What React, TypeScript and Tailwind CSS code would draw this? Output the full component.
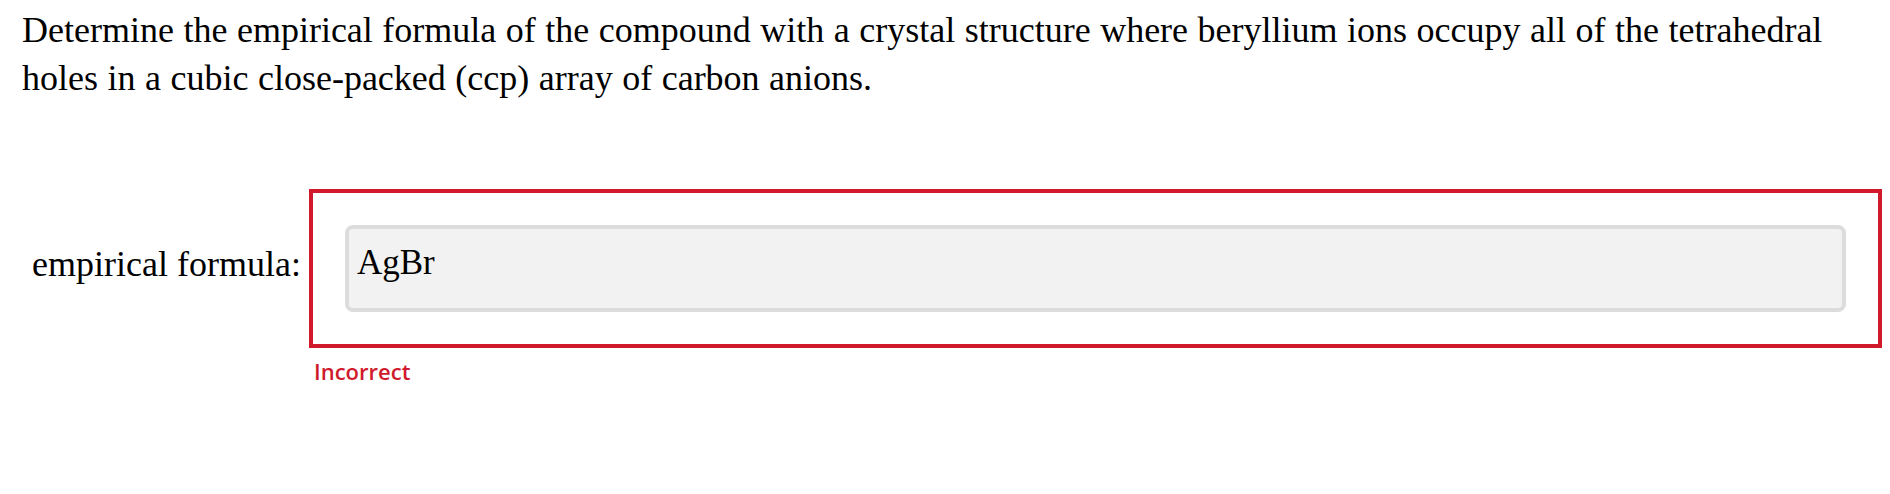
export default function App() {
  return (
    <main className="min-h-screen w-full bg-white pl-[22px] pr-2 pt-[6px] text-black font-['Liberation_Serif','Times_New_Roman',serif]">
      {/* Question */}
      <p className="text-[36px] leading-[48px] [word-spacing:0.5px]">
        Determine the empirical formula of the compound with a crystal structure where beryllium ions occupy all of the tetrahedral holes in a cubic close-packed (ccp) array of carbon anions.
      </p>

      {/* Answer row */}
      <div className="mt-[87px] flex items-center">
        <label className="mb-[10px] w-[287px] shrink-0 pl-[10px] text-[36px] leading-[40px]">empirical formula:</label>
        <div className="flex-1 border-4 border-[#d0192b] p-8">
          <div className="h-[87px] rounded-lg border-4 border-[#dcdcdc] bg-[#f2f2f2] pl-2 pt-[14px] text-[35px] leading-[40px]">
            AgBr
          </div>
        </div>
      </div>
      <div className="ml-[287px] mt-2 pl-[5px] font-['Open_Sans',sans-serif] text-[22px] font-semibold leading-[30px] text-[#d0192b]">
        Incorrect
      </div>
    </main>
  );
}
